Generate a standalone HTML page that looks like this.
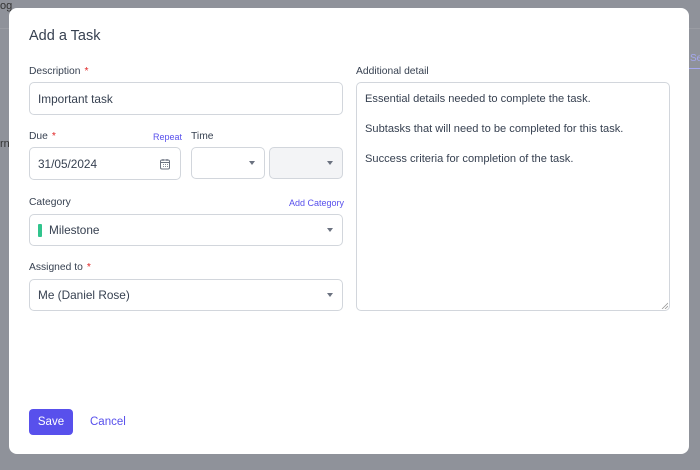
<!DOCTYPE html>
<html><head><style>
*{box-sizing:border-box;margin:0;padding:0}
body{width:700px;height:470px;background:#8f929a;font-family:"Liberation Sans",sans-serif;position:relative;overflow:hidden;color:#374151}
.a{position:absolute}
.modal{left:9px;top:8px;width:680px;height:446px;background:#fff;border-radius:8px}
.lbl{font-size:10.3px;color:#374151}
.req{color:#e02424;margin-left:4px}
.inp{border:1px solid #d2d6dc;border-radius:5px;background:#fff;font-size:11.8px;color:#374151;padding-left:8px;display:flex;align-items:center}
.car{position:absolute;right:9px;top:50%;margin-top:-2px;border-left:3px solid transparent;border-right:3px solid transparent;border-top:4px solid #6b7280}
.link{font-size:9px;color:#5850ec}
</style></head><body>
<div class="a" style="left:0;top:0;width:9px;height:30px;font-size:11px;color:#333">og</div>
<div class="a" style="left:0;top:28px;width:700px;height:1px;background:#9a9ca3"></div>
<div class="a" style="left:0;top:138px;font-size:11px;color:#333">rn</div>
<div class="a" style="left:690px;top:53px;font-size:10px;color:#a5a8ef">Se</div>
<div class="a" style="left:689px;top:68px;width:11px;height:1px;background:#a5a8ef"></div>
<div class="a modal"></div>
<div class="a" style="left:29px;top:28px;font-size:14.5px;color:#374151">Add a Task</div>

<div class="a lbl" style="left:29px;top:66px">Description<span class="req">*</span></div>
<div class="a inp" style="left:29px;top:82px;width:314px;height:33px">Important task</div>

<div class="a lbl" style="left:29px;top:131px">Due<span class="req">*</span></div>
<div class="a link" style="left:153px;top:132px">Repeat</div>
<div class="a lbl" style="left:191px;top:131px">Time</div>
<div class="a inp" style="left:29px;top:147px;width:152px;height:33px">31/05/2024
<svg class="a" style="right:9px;top:10px" width="12" height="12" viewBox="0 0 12 12" fill="none" stroke="#6b7280" stroke-width="1"><rect x="1.5" y="2" width="9" height="9" rx="1.5"/><path d="M1.5 4.5h9M4 1v2M8 1v2M4 6.5h.8M6 6.5h.8M8 6.5h.8M4 8.5h.8M6 8.5h.8M8 8.5h.8"/></svg></div>
<div class="a inp" style="left:191px;top:147px;width:74px;height:32px"><span class="car"></span></div>
<div class="a inp" style="left:269px;top:147px;width:74px;height:32px;background:#f3f4f6"><span class="car"></span></div>

<div class="a lbl" style="left:29px;top:197px">Category</div>
<div class="a link" style="left:289px;top:198px">Add Category</div>
<div class="a inp" style="left:29px;top:214px;width:314px;height:32px;padding-left:8px"><span style="display:inline-block;width:4px;height:13px;background:#31c48d;border-radius:1px;margin-right:7px"></span>Milestone<span class="car"></span></div>

<div class="a lbl" style="left:29px;top:262px">Assigned to<span class="req">*</span></div>
<div class="a inp" style="left:29px;top:279px;width:314px;height:32px">Me (Daniel Rose)<span class="car"></span></div>

<div class="a lbl" style="left:356px;top:66px">Additional detail</div>
<div class="a" style="left:356px;top:82px;width:314px;height:229px;border:1px solid #d2d6dc;border-radius:5px;font-size:11.1px;color:#374151;padding:9px 8px;line-height:15px">Essential details needed to complete the task.<br><br>Subtasks that will need to be completed for this task.<br><br>Success criteria for completion of the task.
<svg class="a" style="right:1px;bottom:1px" width="7" height="7" viewBox="0 0 7 7" stroke="#999" stroke-width=".8"><path d="M1 7L7 1M4 7L7 4"/></svg></div>

<div class="a" style="left:29px;top:409px;width:44px;height:26px;background:#5850ec;border-radius:4px;color:#fff;font-size:11.5px;display:flex;align-items:center;justify-content:center">Save</div>
<div class="a" style="left:90px;top:416px;font-size:11.5px;color:#5850ec">Cancel</div>
</body></html>
